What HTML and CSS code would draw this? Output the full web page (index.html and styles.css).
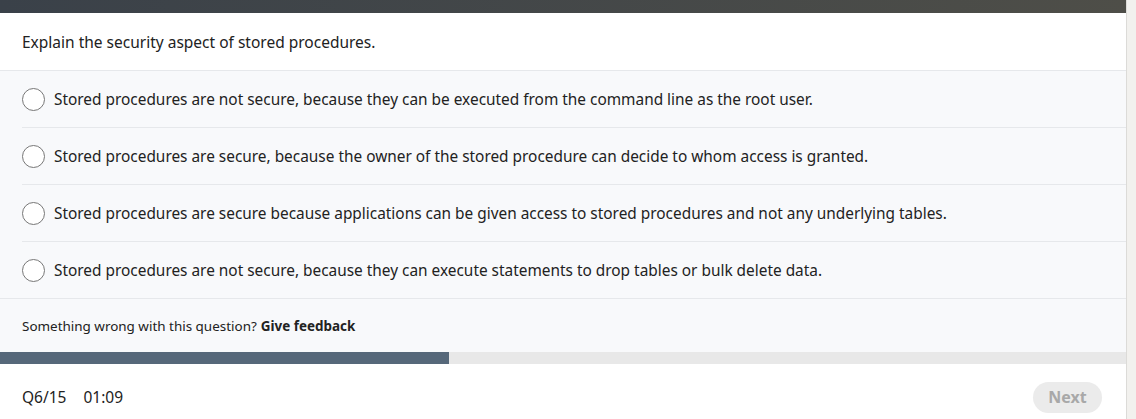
FILE: index.html
```html
<!DOCTYPE html>
<html>
<head>
    <title>Question 6 of 15</title>
    <meta name="viewport" content="width=device-width, initial-scale=1.0">
    <link rel="stylesheet" href="styles.css">
</head>
<body>
    <div class="page">
        <div class="main">
            <div class="top-bar"></div>

            <!-- Question -->
            <div class="question">Explain the security aspect of stored procedures.</div>

            <!-- Answer options -->
            <div class="options">
                <label class="option">
                    <span class="radio"></span>
                    <span>Stored procedures are not secure, because they can be executed from the command line as the root user.</span>
                </label>
                <label class="option">
                    <span class="radio"></span>
                    <span>Stored procedures are secure, because the owner of the stored procedure can decide to whom access is granted.</span>
                </label>
                <label class="option">
                    <span class="radio"></span>
                    <span>Stored procedures are secure because applications can be given access to stored procedures and not any underlying tables.</span>
                </label>
                <label class="option">
                    <span class="radio"></span>
                    <span>Stored procedures are not secure, because they can execute statements to drop tables or bulk delete data.</span>
                </label>
            </div>

            <div class="feedback">Something wrong with this question? <b>Give feedback</b></div>

            <div class="progress">
                <div class="progress-fill" style="width: 449px;"></div>
            </div>

            <div class="footer">
                <span class="counter">Q6/15</span>
                <span class="timer">01:09</span>
                <button class="next" disabled>Next</button>
            </div>
        </div>
        <div class="scrollbar"></div>
    </div>
</body>
</html>
```

FILE: styles.css
```css
body {
    font-family: "Noto Sans", "Open Sans", sans-serif;
    color: #222;
    margin: 0;
    padding: 0;
    background-color: #fff;
}

.page {
    display: flex;
    height: 419px;
    overflow: hidden;
}

.main {
    flex: 1;
    display: flex;
    flex-direction: column;
}

.scrollbar {
    width: 9px;
    border-left: 1px solid #dcdbd8;
    background-color: #f2f1ee;
}

.top-bar {
    height: 13px;
    background: linear-gradient(to right, #3a4149, #4e4e48);
}

.question {
    height: 57px;
    padding-left: 22px;
    display: flex;
    align-items: center;
    font-size: 15.5px;
    border-bottom: 1px solid #e6e8eb;
}

.options {
    background-color: #f8f9fb;
    border-bottom: 1px solid #e6e8eb;
}

.option {
    display: flex;
    align-items: center;
    height: 56px;
    margin-left: 22px;
    font-size: 15.4px;
    border-bottom: 1px solid #e6e8eb;
    cursor: pointer;
}

.option:last-child {
    border-bottom: none;
}

.radio {
    width: 21px;
    height: 21px;
    border: 1px solid #777;
    border-radius: 50%;
    background-color: #fff;
    margin-right: 9px;
    flex-shrink: 0;
}

.feedback {
    height: 53px;
    padding-left: 22px;
    display: flex;
    align-items: center;
    font-size: 13.45px;
    background-color: #f8f9fb;
}

.feedback b {
    margin-left: 4px;
}

.progress {
    height: 12px;
    background-color: #e8e8e8;
}

.progress-fill {
    height: 100%;
    background-color: #56687a;
}

.footer {
    flex: 1;
    display: flex;
    align-items: center;
    padding: 11px 24px 0 22px;
    font-size: 15.5px;
}

.timer {
    margin-left: 17px;
}

.next {
    margin-left: auto;
    font-family: inherit;
    font-size: 16px;
    font-weight: bold;
    color: #a8a8a8;
    background-color: #ebebeb;
    border: none;
    border-radius: 16px;
    width: 69px;
    height: 31px;
}
```
